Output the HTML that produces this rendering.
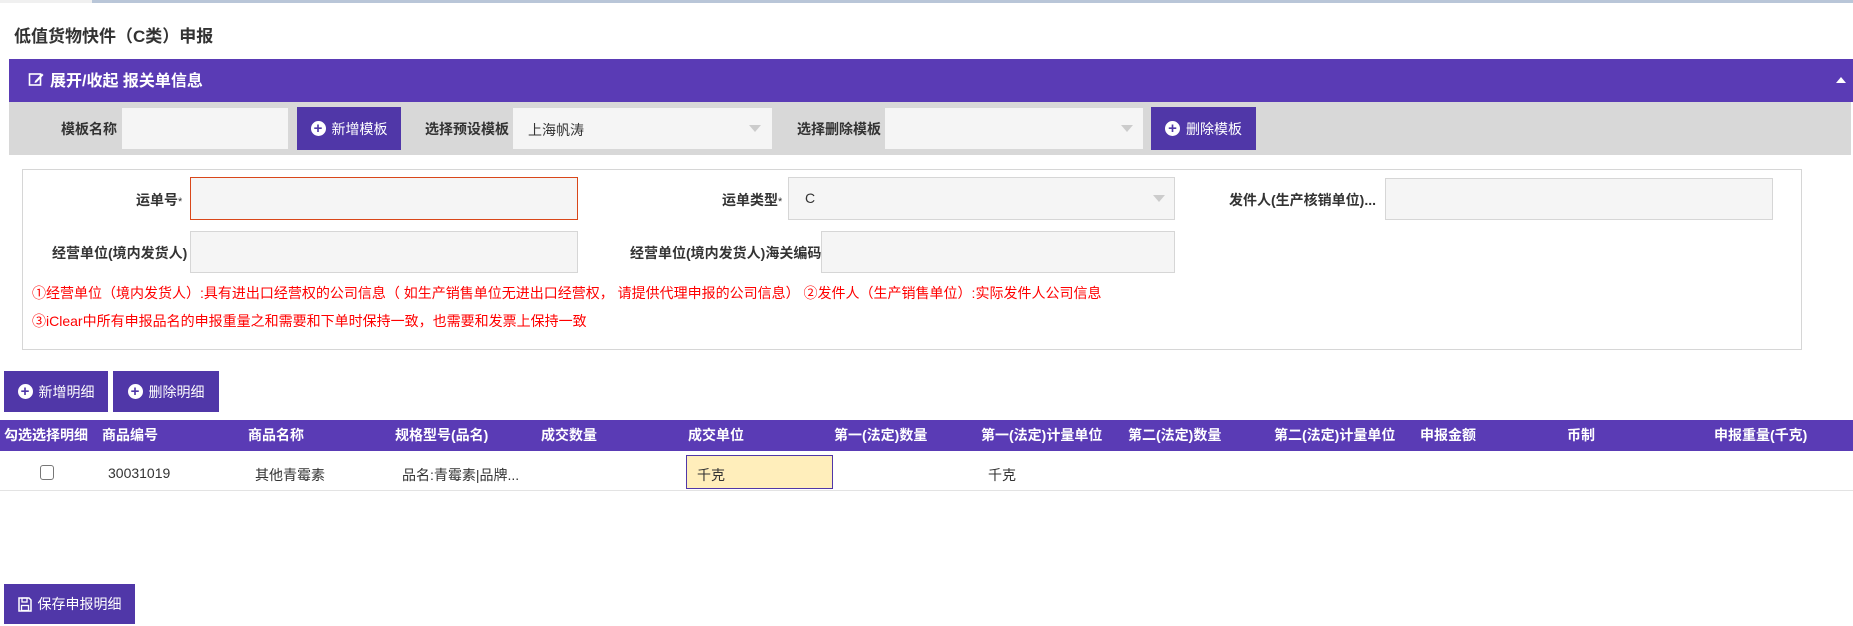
<!DOCTYPE html>
<html><head><meta charset="utf-8"><style>
*{box-sizing:border-box;margin:0;padding:0}
body{width:1853px;height:626px;position:relative;overflow:hidden;background:#fff;font-family:"Liberation Sans","Noto Sans CJK SC",sans-serif;font-size:14px;color:#333}
.a{position:absolute;white-space:nowrap}
.lbl{font-weight:bold;font-size:14px;color:#333}
.inp{position:absolute;background:#f5f5f5;border:1px solid #d6d6d6}
.btn{position:absolute;background:#5037a8;color:#fff;font-size:14px;display:flex;align-items:center;justify-content:center;gap:6px}
.pl{width:15px;height:15px;border-radius:50%;background:#fff;color:#5037a8;font-weight:bold;font-size:15px;line-height:15px;text-align:center}
.arr{position:absolute;width:0;height:0;border-left:6px solid transparent;border-right:6px solid transparent;border-top:7px solid #ccc}
.th{position:absolute;top:420px;height:31px;line-height:31px;color:#fff;font-weight:bold;font-size:14px}
.red{color:#f00;font-size:14px}
</style></head><body>
<div class="a" style="left:0;top:0;width:1853px;height:3px;background:#b9c6d8"></div>
<div class="a" style="left:0;top:0;width:92px;height:3px;background:#f0f0f0"></div>
<div class="a lbl" style="left:14px;top:22px;font-size:17px">低值货物快件（C类）申报</div>

<div class="a" style="left:9px;top:59px;width:1844px;height:43px;background:#5a3bb5"></div>
<svg class="a" style="left:28px;top:71px" width="16" height="16" viewBox="0 0 16 16"><rect x="1.5" y="3" width="11" height="11" fill="none" stroke="#fff" stroke-width="1.6"/><path d="M7 10 L14 2.5 L15.5 4 L8.5 11.5 L6.5 12 Z" fill="#fff"/></svg>
<div class="a" style="left:50px;top:67px;color:#fff;font-weight:bold;font-size:16px">展开/收起 报关单信息</div>
<div class="a" style="left:1836px;top:77px;width:0;height:0;border-left:5px solid transparent;border-right:5px solid transparent;border-bottom:6px solid #fff"></div>

<div class="a" style="left:9px;top:102px;width:1842px;height:53px;background:#d8d8d8"></div>
<div class="a lbl" style="left:61px;top:119px">模板名称</div>
<div class="inp" style="left:122px;top:108px;width:166px;height:41px;background:#f5f5f5;border:none"></div>
<div class="btn" style="left:297px;top:107px;width:104px;height:43px"><span class="pl">+</span>新增模板</div>
<div class="a lbl" style="left:425px;top:119px">选择预设模板</div>
<div class="inp" style="left:513px;top:108px;width:259px;height:41px;border:none"></div>
<div class="a" style="left:528px;top:120px;font-size:14px">上海帆涛</div>
<div class="arr" style="left:749px;top:125px"></div>
<div class="a lbl" style="left:797px;top:119px">选择删除模板</div>
<div class="inp" style="left:885px;top:108px;width:258px;height:41px;border:none"></div>
<div class="arr" style="left:1121px;top:125px"></div>
<div class="btn" style="left:1151px;top:107px;width:105px;height:43px"><span class="pl">+</span>删除模板</div>

<div class="a" style="left:22px;top:169px;width:1780px;height:181px;border:1px solid #d6d6d6"></div>
<div class="a lbl" style="left:136px;top:190px">运单号<span style="font-weight:normal;font-size:11px">*</span></div>
<div class="inp" style="left:190px;top:177px;width:388px;height:43px;border-color:#d9471a"></div>
<div class="a lbl" style="left:722px;top:190px">运单类型<span style="font-weight:normal;font-size:11px">*</span></div>
<div class="inp" style="left:788px;top:177px;width:387px;height:43px"></div>
<div class="a" style="left:805px;top:190px">C</div>
<div class="arr" style="left:1153px;top:195px"></div>
<div class="a lbl" style="left:1229px;top:190px">发件人(生产核销单位)...</div>
<div class="inp" style="left:1385px;top:178px;width:388px;height:42px"></div>

<div class="a lbl" style="left:52px;top:243px">经营单位(境内发货人)</div>
<div class="inp" style="left:190px;top:231px;width:388px;height:42px"></div>
<div class="a lbl" style="left:630px;top:243px">经营单位(境内发货人)海关编码</div>
<div class="inp" style="left:821px;top:231px;width:354px;height:42px"></div>

<div class="a red" style="left:32px;top:283px">①经营单位（境内发货人）:具有进出口经营权的公司信息（ 如生产销售单位无进出口经营权， 请提供代理申报的公司信息） ②发件人（生产销售单位）:实际发件人公司信息</div>
<div class="a red" style="left:32px;top:311px">③iClear中所有申报品名的申报重量之和需要和下单时保持一致，也需要和发票上保持一致</div>

<div class="btn" style="left:4px;top:371px;width:104px;height:41px"><span class="pl">+</span>新增明细</div>
<div class="btn" style="left:113px;top:371px;width:106px;height:41px"><span class="pl">+</span>删除明细</div>

<div class="a" style="left:0;top:420px;width:1853px;height:31px;background:#5a3bb5"></div>
<div class="th" style="left:4px">勾选选择明细</div>
<div class="th" style="left:102px">商品编号</div>
<div class="th" style="left:248px">商品名称</div>
<div class="th" style="left:395px">规格型号(品名)</div>
<div class="th" style="left:541px">成交数量</div>
<div class="th" style="left:688px">成交单位</div>
<div class="th" style="left:834px">第一(法定)数量</div>
<div class="th" style="left:981px">第一(法定)计量单位</div>
<div class="th" style="left:1128px">第二(法定)数量</div>
<div class="th" style="left:1274px">第二(法定)计量单位</div>
<div class="th" style="left:1420px">申报金额</div>
<div class="th" style="left:1567px">币制</div>
<div class="th" style="left:1714px">申报重量(千克)</div>

<div class="a" style="left:0;top:490px;width:1853px;height:1px;background:#e3e3e3"></div>
<div class="a" style="left:40px;top:465px;width:14px;height:15px;border:1px solid #777;border-radius:3px"></div>
<div class="a" style="left:108px;top:465px">30031019</div>
<div class="a" style="left:255px;top:465px">其他青霉素</div>
<div class="a" style="left:402px;top:465px">品名:青霉素|品牌...</div>
<div class="a" style="left:686px;top:455px;width:147px;height:34px;background:#ffeebb;border:1px solid #5037a8"></div>
<div class="a" style="left:697px;top:465px">千克</div>
<div class="a" style="left:988px;top:465px">千克</div>

<div class="btn" style="left:4px;top:584px;width:131px;height:40px"><svg width="14" height="15" viewBox="0 0 14 15"><path d="M1 1 H11 L13 3 V14 H1 Z" fill="none" stroke="#fff" stroke-width="1.5"/><rect x="4" y="1" width="5" height="4" fill="none" stroke="#fff" stroke-width="1.3"/><rect x="3.5" y="8.5" width="7" height="5" fill="none" stroke="#fff" stroke-width="1.3"/></svg>保存申报明细</div>
</body></html>
